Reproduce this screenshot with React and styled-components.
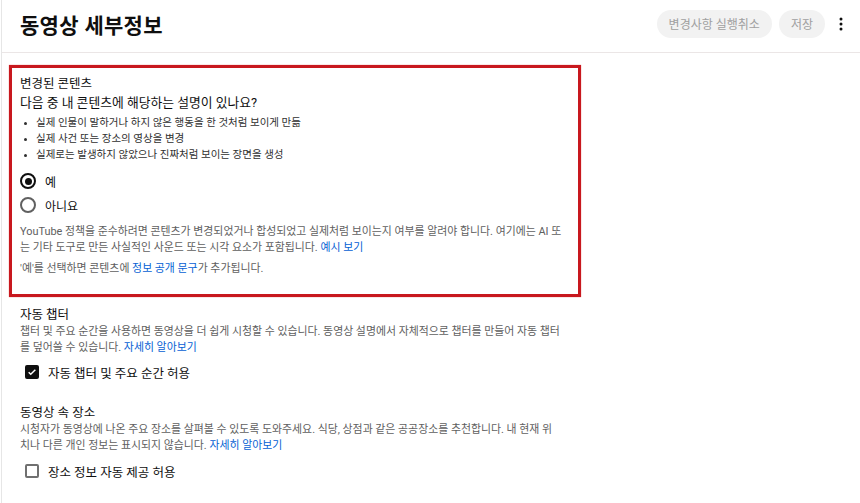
import React from 'react'
import styled, { createGlobalStyle } from 'styled-components'

const GlobalStyle = createGlobalStyle`
  body {
    margin: 0;
    background: #fff;
    font-family: Roboto, "Noto Sans CJK KR", "Noto Sans", sans-serif;
    color: #0f0f0f;
  }
`

const Page = styled.div`
  width: 859px;
  height: 503px;
  overflow: hidden;
  border-left: 1px solid #e6e6e6;
  margin-left: 1px;
  box-sizing: border-box;
`

const Header = styled.header`
  height: 53px;
  box-sizing: border-box;
  display: flex;
  align-items: center;
  padding: 0 7px 5px 18px;
  border-bottom: 1px solid #ebe6e6;
`

const Title = styled.h1`
  flex: 1;
  margin: 0;
  font-size: 21px;
  font-weight: 700;
  letter-spacing: 0.3px;
  color: #0f0f0f;
`

const PillButton = styled.button`
  height: 28px;
  padding: 0 12px;
  margin-left: 7px;
  border: none;
  border-radius: 14px;
  background: #f2f2f2;
  color: #a0a0a0;
  font-family: inherit;
  font-size: 12px;
`

const MoreButton = styled.div`
  width: 24px;
  height: 24px;
  margin-left: 4px;
  display: flex;
  align-items: center;
  justify-content: center;
`

const Main = styled.main`
  padding: 12px 0 0 7px;
`

const Highlight = styled.section`
  width: 550px;
  border: 3px solid #c8181e;
  box-shadow: 0 0 1px #e56a6e;
  padding: 7px 8px 17px 8px;
`

const Section = styled.section`
  width: ${p => p.$width || 543}px;
  padding: 0 0 0 11px;
  margin-top: ${p => p.$top || 0}px;
`

const Label = styled.div`
  font-size: 12.5px;
  line-height: 18px;
  color: #0f0f0f;
`

const Question = styled.div`
  font-size: 12.8px;
  line-height: 20px;
  margin-top: 0;
  color: #0f0f0f;
`

const Bullets = styled.ul`
  margin: 2px 0 0 0;
  padding: 0 0 0 16px;
  font-size: 10.5px;
  line-height: 16px;
  color: #303030;
  li::marker {
    font-size: 9px;
  }
`

const Radios = styled.div`
  margin-top: 6px;
  display: flex;
  flex-direction: column;
`

const RadioRow = styled.label`
  display: flex;
  align-items: center;
  gap: 9px;
  height: 24px;
  font-size: 12px;
  color: #0f0f0f;
`

const RadioCircle = styled.span`
  width: 12px;
  height: 12px;
  border: 2px solid ${p => (p.$on ? '#0f0f0f' : '#606060')};
  border-radius: 50%;
  display: flex;
  align-items: center;
  justify-content: center;
  &::after {
    content: '';
    display: ${p => (p.$on ? 'block' : 'none')};
    width: 7px;
    height: 7px;
    border-radius: 50%;
    background: #0f0f0f;
  }
`

const Help = styled.p`
  margin: ${p => p.$top || 0}px 0 0 0;
  font-size: 10.9px;
  line-height: 16px;
  color: #606060;
`

const Link = styled.a`
  color: #065fd4;
  text-decoration: none;
`

const CheckRow = styled.label`
  display: flex;
  align-items: center;
  gap: 9px;
  height: 20px;
  margin: ${p => p.$top || 6}px 0 0 5px;
  font-size: 12.5px;
  color: #0f0f0f;
`

const CheckBox = styled.span`
  width: 14px;
  height: 14px;
  border-radius: 2px;
  box-sizing: border-box;
  border: 2px solid ${p => (p.$on ? '#0f0f0f' : '#707070')};
  background: ${p => (p.$on ? '#0f0f0f' : '#fff')};
  display: flex;
  align-items: center;
  justify-content: center;
`

function Radio({ on, children }) {
  return (
    <RadioRow>
      <RadioCircle $on={on} />
      {children}
    </RadioRow>
  )
}

function Check({ on, top, children }) {
  return (
    <CheckRow $top={top}>
      <CheckBox $on={on}>
        {on && (
          <svg width="10" height="10" viewBox="0 0 24 24">
            <path d="M4 12.5l5 5L20 6.5" fill="none" stroke="#fff" strokeWidth="3.5" />
          </svg>
        )}
      </CheckBox>
      {children}
    </CheckRow>
  )
}

export default function App() {
  return (
    <Page>
      <GlobalStyle />
      <Header>
        <Title>동영상 세부정보</Title>
        <PillButton>변경사항 실행취소</PillButton>
        <PillButton>저장</PillButton>
        <MoreButton>
          <svg width="4" height="14" viewBox="0 0 4 14">
            <circle cx="2" cy="2" r="1.5" fill="#0f0f0f" />
            <circle cx="2" cy="7" r="1.5" fill="#0f0f0f" />
            <circle cx="2" cy="12" r="1.5" fill="#0f0f0f" />
          </svg>
        </MoreButton>
      </Header>
      <Main>
        <Highlight>
          <Label>변경된 콘텐츠</Label>
          <Question>다음 중 내 콘텐츠에 해당하는 설명이 있나요?</Question>
          <Bullets>
            <li>실제 인물이 말하거나 하지 않은 행동을 한 것처럼 보이게 만듦</li>
            <li>실제 사건 또는 장소의 영상을 변경</li>
            <li>실제로는 발생하지 않았으나 진짜처럼 보이는 장면을 생성</li>
          </Bullets>
          <Radios>
            <Radio on>예</Radio>
            <Radio>아니요</Radio>
          </Radios>
          <Help $top={7}>
            YouTube 정책을 준수하려면 콘텐츠가 변경되었거나 합성되었고 실제처럼 보이는지 여부를 알려야 합니다. 여기에는 AI 또는 기타 도구로 만든 사실적인 사운드 또는 시각 요소가 포함됩니다. <Link>예시 보기</Link>
          </Help>
          <Help $top={5}>
            '예'를 선택하면 콘텐츠에 <Link>정보 공개 문구</Link>가 추가됩니다.
          </Help>
        </Highlight>
        <Section $top={9}>
          <Label>자동 챕터</Label>
          <Help>
            챕터 및 주요 순간을 사용하면 동영상을 더 쉽게 시청할 수 있습니다. 동영상 설명에서 자체적으로 챕터를 만들어 자동 챕터를 덮어쓸 수 있습니다. <Link>자세히 알아보기</Link>
          </Help>
          <Check on>자동 챕터 및 주요 순간 허용</Check>
        </Section>
        <Section $top={22} $width={540}>
          <Label>동영상 속 장소</Label>
          <Help>
            시청자가 동영상에 나온 주요 장소를 살펴볼 수 있도록 도와주세요. 식당, 상점과 같은 공공장소를 추천합니다. 내 현재 위치나 다른 개인 정보는 표시되지 않습니다. <Link>자세히 알아보기</Link>
          </Help>
          <Check top={7}>장소 정보 자동 제공 허용</Check>
        </Section>
      </Main>
    </Page>
  )
}
